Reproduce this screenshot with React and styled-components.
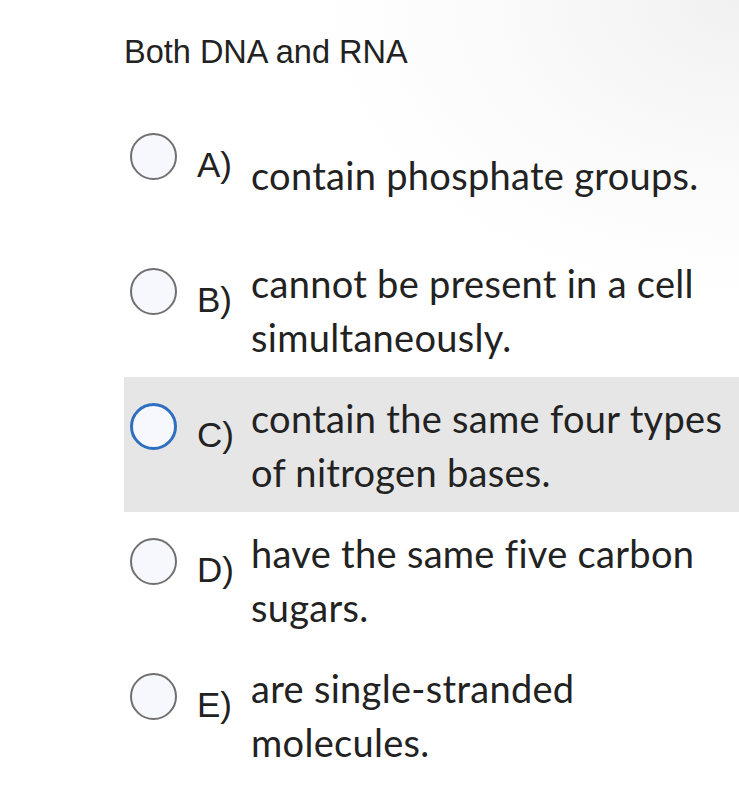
import React from 'react'
import styled, { createGlobalStyle } from 'styled-components'

const GlobalStyle = createGlobalStyle`
    html, body {
        margin: 0;
        padding: 0;
        background: #ffffff;
    }
    body {
        min-height: 799px;
        background: radial-gradient(ellipse 420px 300px at 100% 0%, #f1f1f1 0%, #fafafa 55%, #ffffff 100%);
    }
`

const Page = styled.div`
    display: flex;
    flex-direction: column;
    padding-left: 124px;
    padding-top: 34px;
    min-height: 799px;
    box-sizing: border-box;
`

const Question = styled.h1`
    margin: 0 0 36px 0;
    font-family: "Liberation Sans", Arial, sans-serif;
    font-weight: 400;
    font-size: 32.5px;
    line-height: 37px;
    color: #222222;
`

const Options = styled.div`
    display: flex;
    flex-direction: column;
`

const Row = styled.div`
    display: grid;
    grid-template-columns: 67px 54px 1fr;
    height: 135px;
    padding-left: 6px;
    background: ${props => (props.$selected ? '#e6e6e6' : 'transparent')};
`

const Radio = styled.span`
    align-self: start;
    margin-top: 26px;
    width: 47px;
    height: 47px;
    box-sizing: border-box;
    border-radius: 50%;
    background: #f7f8fd;
    border: ${props => (props.$selected ? '3.5px solid #2f6fc0' : '2px solid #707070')};
`

const Letter = styled.span`
    align-self: start;
    margin-top: 40px;
    font-family: "Liberation Sans", Arial, sans-serif;
    font-size: 35px;
    line-height: 35px;
    color: #222222;
`

const Answer = styled.div`
    align-self: center;
    display: flex;
    flex-direction: column;
    font-family: Lato, "Noto Sans", sans-serif;
    font-size: 38px;
    line-height: 54px;
    letter-spacing: 0.3px;
    font-variant-ligatures: none;
    color: #222222;
`

const Line = styled.span`
    white-space: nowrap;
`

const options = [
    { letter: 'A)', lines: ['contain phosphate groups.'] },
    { letter: 'B)', lines: ['cannot be present in a cell', 'simultaneously.'] },
    { letter: 'C)', lines: ['contain the same four types', 'of nitrogen bases.'], selected: true },
    { letter: 'D)', lines: ['have the same five carbon', 'sugars.'] },
    { letter: 'E)', lines: ['are single-stranded', 'molecules.'] },
]

function App() {
    return (
        <>
            <GlobalStyle />
            <Page>
                <Question>Both DNA and RNA</Question>
                <Options>
                    {options.map(option => (
                        <Row key={option.letter} $selected={option.selected}>
                            <Radio $selected={option.selected} />
                            <Letter>{option.letter}</Letter>
                            <Answer>
                                {option.lines.map(line => (
                                    <Line key={line}>{line}</Line>
                                ))}
                            </Answer>
                        </Row>
                    ))}
                </Options>
            </Page>
        </>
    )
}

export default App
